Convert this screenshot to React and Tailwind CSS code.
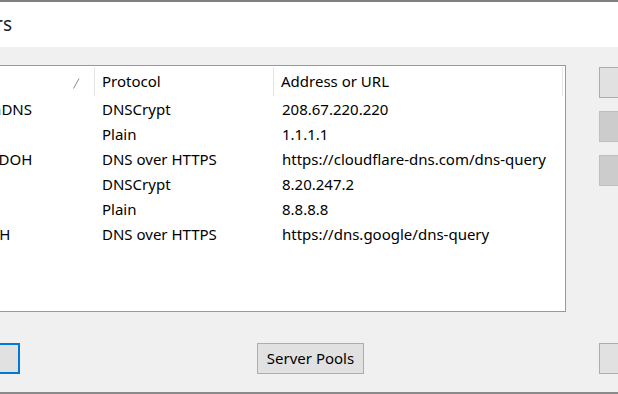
import React from 'react';

const rows = [
  { name: 'Cisco OpenDNS', protocol: 'DNSCrypt', address: '208.67.220.220' },
  { name: 'Cloudflare', protocol: 'Plain', address: '1.1.1.1' },
  { name: 'Cloudflare DOH', protocol: 'DNS over HTTPS', address: 'https://cloudflare-dns.com/dns-query' },
  { name: 'Comodo', protocol: 'DNSCrypt', address: '8.20.247.2' },
  { name: 'Google', protocol: 'Plain', address: '8.8.8.8' },
  { name: 'Google DOH', protocol: 'DNS over HTTPS', address: 'https://dns.google/dns-query' },
];

const HeaderCell = ({ children }) => (
  <div className="flex items-stretch">
    <div className="w-px my-[1px] bg-[#e5e5e5]" />
    <div className="flex items-center pl-[7px] whitespace-nowrap">{children}</div>
  </div>
);

const SideButton = ({ label, disabled }) => (
  <button
    className={`h-[31px] w-[100px] border text-[15px] ${
      disabled ? 'bg-[#cccccc] border-[#bfbfbf] text-[#838383]' : 'bg-[#e1e1e1] border-[#adadad] text-black'
    }`}
  >
    {label}
  </button>
);

const App = () => {
  return (
    <div className="w-[618px] h-[394px] overflow-hidden bg-[#f0f0f0] flex flex-col font-['Noto_Sans','Open_Sans',sans-serif] text-black">
      <div className="h-[2px] bg-[#7f7f7f] shrink-0" />

      <div className="h-[45px] bg-white shrink-0 flex">
        <div className="w-[12px] shrink-0 flex justify-end pt-[13px]">
          <span className="whitespace-nowrap text-[19px] leading-[19px] text-[#1c1c2c]">DNS Servers</span>
        </div>
      </div>

      <div className="flex-1 flex flex-col ml-[-100px] w-[820px]">
        <div className="flex mt-[18px]">
          <div className="ml-[12px] w-[654px] h-[247px] bg-white border border-[#999999] overflow-hidden">
            <div className="grid grid-cols-[181px_179px_289px_1fr] h-[31px] text-[15px]">
              <div className="flex justify-between items-stretch">
                <div className="flex items-center pl-[9px] whitespace-nowrap">Name</div>
                <svg className="mt-[12px] mr-[14px]" width="8" height="11" viewBox="0 0 8 11">
                  <path d="M7 0.5 L1.5 10.5" stroke="#8a8a8a" strokeWidth="1" fill="none" />
                </svg>
              </div>
              <HeaderCell>Protocol</HeaderCell>
              <HeaderCell>Address or URL</HeaderCell>
              <HeaderCell />
            </div>

            {rows.map((r) => (
              <div key={r.address} className="grid grid-cols-[181px_179px_289px_1fr] h-[25px] text-[15px]">
                <div className="flex items-center pl-[9px] whitespace-nowrap">{r.name}</div>
                <div className="flex items-center pl-[8px] whitespace-nowrap">{r.protocol}</div>
                <div className="flex items-center pl-[9px] whitespace-nowrap">{r.address}</div>
                <div />
              </div>
            ))}
          </div>

          <div className="ml-[33px] mt-[2px] flex flex-col gap-[13px]">
            <SideButton label="Add" />
            <SideButton label="Edit" disabled />
            <SideButton label="Delete" disabled />
          </div>
        </div>

        <div className="flex mt-[31px]">
          <button className="ml-[12px] w-[108px] h-[31px] bg-[#e1e1e1] border-2 border-[#0078d7] text-[15px]">
            Reset
          </button>
          <button className="ml-[237px] w-[107px] h-[31px] bg-[#e1e1e1] border border-[#adadad] text-[15px]">
            Server Pools
          </button>
          <button className="ml-[235px] w-[100px] h-[31px] bg-[#e1e1e1] border border-[#adadad] text-[15px]">
            Close
          </button>
        </div>
      </div>

      <div className="h-[2px] bg-[#8a8a8a] shrink-0" />
    </div>
  );
};

export default App;
